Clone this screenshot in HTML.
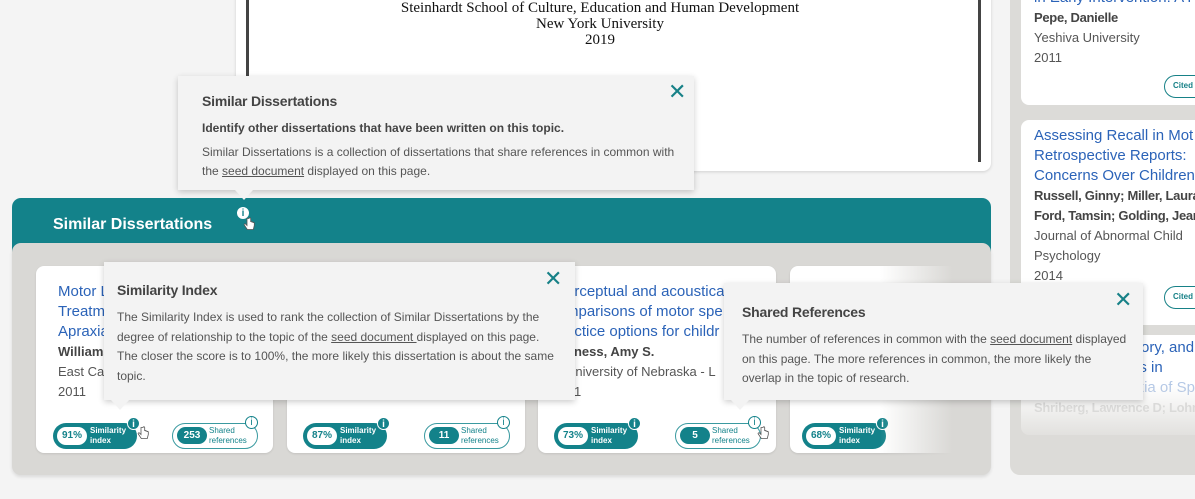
<!DOCTYPE html>
<html><head><meta charset="utf-8"><style>
*{box-sizing:border-box;margin:0;padding:0}
body{width:1195px;height:499px;overflow:hidden;background:#f4f4f4;font-family:"Liberation Sans",Arial,sans-serif;position:relative;color:#555}
.abs{position:absolute}
.doc{left:236px;top:-10px;width:755px;height:181px;background:#fff;border-radius:8px;box-shadow:0 1px 3px rgba(0,0,0,.15)}
.doc .l{position:absolute;left:10px;top:0;width:3px;height:172px;background:#444}
.doc .r{position:absolute;left:742px;top:0;width:3px;height:172px;background:#444}
.doc .t{position:absolute;left:0;width:728px;text-align:center;font-family:"Liberation Serif",serif;font-size:15px;color:#111;line-height:16px}
.rp{left:1010px;top:-10px;width:200px;height:485px;background:#dcdbd8;border-radius:10px}
.rc{position:absolute;left:11px;width:200px;background:#fff;border-radius:8px}
.rc div{font-size:13px;line-height:20px;padding-left:13px;color:#555;white-space:nowrap}
.rc .ti{color:#2b63b8;font-size:15px}
.rc .au{font-weight:bold;color:#444;letter-spacing:-0.3px}
.cited{position:absolute;left:143px;border:1px solid #178187;border-radius:14px;color:#178187;font-size:8px;font-weight:bold;padding:5px 8px;width:60px;height:23px}
.head{left:12px;top:198px;width:979px;height:60px;background:#13828a;border-radius:9px 9px 0 0}
.head span{position:absolute;left:41px;top:18px;color:#fff;font-weight:bold;font-size:16px}
.body{left:12px;top:243px;width:979px;height:232px;background:#d9d8d5;border-radius:9px;box-shadow:0 2px 3px rgba(0,0,0,.1)}
.card{position:absolute;top:266px;height:187px;background:#fff;border-radius:8px;box-shadow:0 1px 2px rgba(0,0,0,.1)}
.card .tx{position:absolute;left:22px;top:16px;font-size:15px;line-height:20px;color:#2b63b8;white-space:nowrap;overflow:hidden}
.card .m{font-size:13px;line-height:20px;color:#555}
.pill{position:absolute;top:157px;height:26px;width:84px;border-radius:13px;background:#13828a}
.pill .n{position:absolute;left:4px;top:4px;width:30px;height:18px;border-radius:9px;background:#fff;color:#13828a;font-size:10px;font-weight:bold;text-align:center;line-height:18px}
.pill .lb{position:absolute;left:37px;top:3px;font-size:8px;font-weight:bold;color:#fff;line-height:10px}
.sp{position:absolute;top:157px;height:26px;width:86px;border-radius:13px;border:1.5px solid #3a9aa0;background:#fff}
.sp .n{position:absolute;left:4px;top:3px;width:30px;height:17px;border-radius:9px;background:#13828a;color:#fff;font-size:10px;font-weight:bold;text-align:center;line-height:17px}
.sp .lb{position:absolute;left:36px;top:2px;font-size:8px;color:#13828a;line-height:10px}
.ic{position:absolute;width:13px;height:13px;border-radius:50%;background:#13828a;color:#fff;font-size:10px;font-weight:bold;text-align:center;line-height:13px;border:1px solid #fff}
.ico{position:absolute;width:13px;height:13px;border-radius:50%;background:#fff;color:#13828a;font-size:10px;text-align:center;line-height:11px;border:1px solid #13828a}
.tip{position:absolute;background:#f3f3f3;box-shadow:0 2px 6px rgba(0,0,0,.2);color:#555}
.tip h3{font-size:14px;font-weight:bold;color:#444;margin-bottom:10px;letter-spacing:-0.2px}
.tip p{font-size:12px;line-height:19.5px;white-space:nowrap}
.tip u{text-decoration:underline}
.tip .x{position:absolute;font-size:22px;color:#178187;line-height:20px}
.arr{position:absolute;width:0;height:0;border-left:9px solid transparent;border-right:9px solid transparent;border-top:10px solid #f3f3f3}
.fade{position:absolute}
.hand{position:absolute;width:12px;height:14px}
</style></head><body>

<div class="abs doc"><div class="l"></div><div class="r"></div>
<div class="t" style="top:10px">Steinhardt School of Culture, Education and Human Development</div>
<div class="t" style="top:26px">New York University</div>
<div class="t" style="top:42px">2019</div></div>

<div class="abs rp">
 <div class="rc" style="top:0;height:115px">
  <div class="ti" style="margin-top:-2px">in Early Intervention: A P</div>
  <div class="au" style="margin-top:0">Pepe, Danielle</div>
  <div>Yeshiva University</div><div>2011</div>
  <span class="cited" style="top:85px">Cited b</span>
 </div>
 <div class="rc" style="top:130px;height:205px;padding-top:6px">
  <div class="ti">Assessing Recall in Mot</div><div class="ti">Retrospective Reports:</div><div class="ti">Concerns Over Children's</div>
  <div class="au">Russell, Ginny; Miller, Laura</div><div class="au">Ford, Tamsin; Golding, Jean</div>
  <div>Journal of Abnormal Child</div><div>Psychology</div><div>2014</div>
  <span class="cited" style="top:166px">Cited b</span>
 </div>
 <div class="rc" style="top:345px;height:100px;padding-top:3px">
  <div class="ti" style="padding-left:120px">ory, and</div><div class="ti" style="padding-left:100px">icits in</div>
  <div class="ti" style="opacity:.35">Childhood Apraxia of Sp</div><div class="au" style="opacity:.2">Shriberg, Lawrence D; Lohm</div>
 </div>
 <div class="fade" style="left:0;top:395px;width:200px;height:60px;background:linear-gradient(to bottom,rgba(220,219,216,0),#dcdbd8)"></div>
</div>

<div class="abs head"><span>Similar Dissertations</span></div>
<div class="abs body"></div>

<div class="card" style="left:36px;width:237px"><div class="tx">Motor L<br>Treatm<br>Apraxia</div>
 <div class="abs m" style="left:22px;top:76px;font-weight:bold;color:#444">Williams</div>
 <div class="abs m" style="left:22px;top:96px">East Car</div><div class="abs m" style="left:22px;top:116px">2011</div>
 <div class="pill" style="left:17px"><div class="n">91%</div><div class="lb">Similarity<br>index</div></div><div class="ic" style="left:91px;top:151px">i</div>
 <div class="sp" style="left:136px"><div class="n">253</div><div class="lb">Shared<br>references</div></div><div class="ico" style="left:209px;top:150px">i</div>
</div>
<div class="card" style="left:287px;width:238px">
 <div class="pill" style="left:16px"><div class="n">87%</div><div class="lb">Similarity<br>index</div></div><div class="ic" style="left:90px;top:151px">i</div>
 <div class="sp" style="left:137px"><div class="n">11</div><div class="lb">Shared<br>references</div></div><div class="ico" style="left:210px;top:150px">i</div>
</div>
<div class="card" style="left:538px;width:238px"><div class="tx" style="left:28px">erceptual and acoustica<br>mparisons of motor spe<br>actice options for childr</div>
 <div class="abs m" style="left:28px;top:76px;font-weight:bold;color:#444">dness, Amy S.</div>
 <div class="abs m" style="left:28px;top:96px">University of Nebraska - L</div><div class="abs m" style="left:36px;top:116px">1</div>
 <div class="pill" style="left:16px"><div class="n">73%</div><div class="lb">Similarity<br>index</div></div><div class="ic" style="left:90px;top:151px">i</div>
 <div class="sp" style="left:137px"><div class="n">5</div><div class="lb">Shared<br>references</div></div><div class="ico" style="left:210px;top:150px">i</div>
</div>
<div class="card" style="left:790px;width:175px">
 <div class="pill" style="left:12px"><div class="n">68%</div><div class="lb">Similarity<br>index</div></div><div class="ic" style="left:86px;top:151px">i</div>
</div>
<div class="fade" style="left:880px;top:262px;width:90px;height:195px;background:linear-gradient(to right,rgba(217,216,213,0),#d9d8d5 80%)"></div>

<!-- tooltip 1 -->
<div class="tip" style="left:178px;top:76px;width:516px;height:114px;padding:17px 24px">
 <h3>Similar Dissertations</h3>
 <p style="font-weight:bold;color:#444;margin-bottom:4px;font-size:12px">Identify other dissertations that have been written on this topic.</p>
 <p>Similar Dissertations is a collection of dissertations that share references in common with<br>the <u>seed document</u> displayed on this page.</p>
 <span class="x" style="left:490px;top:6px">✕</span>
</div>
<div class="arr" style="left:235px;top:190px"></div>
<div class="ic" style="left:236px;top:206px;width:14px;height:14px;background:#fff;color:#13828a;border-color:#13828a">i</div>
<svg class="hand" style="left:243px;top:217px" viewBox="0 0 12 14"><path d="M4 1.5v7l-1.5-1.5c-.8-.6-1.8.2-1.2 1l3 4.5h6l1-4v-2.5c0-.8-1.2-.8-1.2 0v-.5c0-.8-1.2-.8-1.2 0v-.5c0-.8-1.2-.8-1.2 0V1.5c0-1-1.7-1-1.7 0z" fill="#fff" stroke="#555" stroke-width=".8"/></svg>

<!-- tooltip 2 -->
<div class="tip" style="left:104px;top:262px;width:471px;height:138px;padding:20px 13px">
 <h3>Similarity Index</h3>
 <p>The Similarity Index is used to rank the collection of Similar Dissertations by the<br>degree of relationship to the topic of the <u>seed document </u>displayed on this page.<br>The closer the score is to 100%, the more likely this dissertation is about the same<br>topic.</p>
 <span class="x" style="left:440px;top:7px">✕</span>
</div>
<div class="arr" style="left:111px;top:400px"></div>
<svg class="hand" style="left:137px;top:426px" viewBox="0 0 12 14"><path d="M4 1.5v7l-1.5-1.5c-.8-.6-1.8.2-1.2 1l3 4.5h6l1-4v-2.5c0-.8-1.2-.8-1.2 0v-.5c0-.8-1.2-.8-1.2 0v-.5c0-.8-1.2-.8-1.2 0V1.5c0-1-1.7-1-1.7 0z" fill="#fff" stroke="#555" stroke-width=".8"/></svg>

<!-- tooltip 3 -->
<div class="tip" style="left:724px;top:283px;width:419px;height:117px;padding:21px 18px">
 <h3>Shared References</h3>
 <p>The number of references in common with the <u>seed document</u> displayed<br>on this page. The more references in common, the more likely the<br>overlap in the topic of research.</p>
 <span class="x" style="left:390px;top:7px">✕</span>
</div>
<div class="arr" style="left:731px;top:400px"></div>
<svg class="hand" style="left:757px;top:426px" viewBox="0 0 12 14"><path d="M4 1.5v7l-1.5-1.5c-.8-.6-1.8.2-1.2 1l3 4.5h6l1-4v-2.5c0-.8-1.2-.8-1.2 0v-.5c0-.8-1.2-.8-1.2 0v-.5c0-.8-1.2-.8-1.2 0V1.5c0-1-1.7-1-1.7 0z" fill="#fff" stroke="#555" stroke-width=".8"/></svg>
</body></html>
